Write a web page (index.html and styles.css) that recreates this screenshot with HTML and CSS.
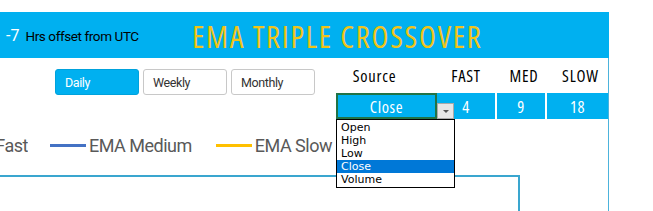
FILE: index.html
```html
<!DOCTYPE html>
<html lang="en">
<head>
    <meta charset="UTF-8">
    <title>EMA Triple Crossover</title>
    <link rel="stylesheet" href="styles.css">
</head>
<body>
    <div class="page">
        <div class="header">
            <div class="offset">
                <span class="offset-value">-7</span>
                <span class="offset-label">Hrs offset from UTC</span>
            </div>
            <h1 class="title">EMA TRIPLE CROSSOVER</h1>
        </div>

        <div class="sheet">
            <div class="controls">
                <div class="period-buttons">
                    <button class="period-btn active">Daily</button>
                    <button class="period-btn">Weekly</button>
                    <button class="period-btn">Monthly</button>
                </div>

                <div class="params">
                    <div class="params-head">
                        <div class="head-cell source-head">Source</div>
                        <div class="head-cell fast">FAST</div>
                        <div class="head-cell med">MED</div>
                        <div class="head-cell slow">SLOW</div>
                    </div>
                    <div class="params-row">
                        <div class="value-cell source-cell">
                            Close
                            <span class="drop-btn"></span>
                            <ul class="drop-list">
                                <li>Open</li>
                                <li>High</li>
                                <li>Low</li>
                                <li class="selected">Close</li>
                                <li>Volume</li>
                            </ul>
                        </div>
                        <div class="value-cell fast">4</div>
                        <div class="value-cell med">9</div>
                        <div class="value-cell slow">18</div>
                    </div>
                </div>
            </div>

            <div class="legend">
                <div class="legend-item legend-cut">
                    <span class="legend-line green"></span>
                    <span>EMA Fast</span>
                </div>
                <div class="legend-item">
                    <span class="legend-line blue"></span>
                    <span>EMA Medium</span>
                </div>
                <div class="legend-item">
                    <span class="legend-line gold"></span>
                    <span>EMA Slow</span>
                </div>
            </div>

            <div class="chart-frame"></div>
        </div>
    </div>
</body>
</html>
```

FILE: styles.css
```css
* {
    margin: 0;
    padding: 0;
    box-sizing: border-box;
}

body {
    background-color: #ffffff;
    font-family: 'Roboto', sans-serif;
    color: #000000;
}

.page {
    width: 653px;
    height: 211px;
    overflow: hidden;
    position: relative;
}

.header {
    margin-top: 12px;
    width: 609px;
    height: 46px;
    background-color: #00b0f0;
    display: flex;
    align-items: center;
    padding-left: 6px;
}

.offset {
    display: flex;
    align-items: baseline;
    width: 186px;
}

.offset-value {
    color: #ffffff;
    font-size: 16px;
    margin-right: 6px;
}

.offset-label {
    font-size: 13.5px;
    letter-spacing: -0.4px;
}

/* condensed humanist face for the sheet cells */
.title,
.params-head,
.value-cell {
    font-family: 'Open Sans', 'Roboto', sans-serif;
    font-stretch: 80%;
}

.title {
    font-size: 31px;
    font-weight: normal;
    letter-spacing: 1.7px;
    color: #f0c419;
    padding-top: 1px;
}

.sheet {
    width: 609px;
    height: 153px;
    border-right: 1px solid #4cb3dc;
}

.controls {
    display: flex;
    padding-top: 5px;
}

.period-buttons {
    display: flex;
    gap: 4px;
    margin-left: 55px;
    margin-top: 6px;
}

.period-btn {
    width: 84px;
    height: 26px;
    border: 1px solid #c8c8c8;
    border-radius: 3px;
    background-color: #ffffff;
    color: #333333;
    font-family: inherit;
    font-size: 12.5px;
    letter-spacing: -0.4px;
    text-align: left;
    padding-left: 9px;
}

.period-btn.active {
    background-color: #00b0f0;
    border-color: #00a2dc;
    color: #ffffff;
}

.params {
    margin-left: auto;
    width: 272px;
}

.params-head,
.params-row {
    display: flex;
}

.params-head {
    height: 24px;
    align-items: center;
    margin-bottom: 6px;
    font-size: 16.5px;
    letter-spacing: 0.8px;
}

.head-cell {
    text-align: center;
}

.source-head,
.source-cell {
    width: 101px;
}

.source-head {
    padding-right: 24px;
}

.fast {
    width: 58px;
}

.med {
    width: 48px;
    margin-left: 2px;
}

.slow {
    width: 61px;
    margin-left: 2px;
}

.head-cell.med,
.head-cell.slow {
    padding-left: 6px;
}

.value-cell {
    height: 26px;
    background-color: #00b0f0;
    color: #ffffff;
    font-size: 16.5px;
    letter-spacing: 0.6px;
    display: flex;
    align-items: center;
    justify-content: center;
}

.source-cell {
    border: 2px solid #217346;
    position: relative;
}

/* dropdown affordance and open list */
.drop-btn {
    position: absolute;
    left: 99px;
    top: 8px;
    width: 17px;
    height: 16px;
    background-color: #e6e6e6;
    border: 1px solid #a9a9a9;
}

.drop-btn::after {
    content: '';
    position: absolute;
    left: 5px;
    top: 6px;
    border-left: 3px solid transparent;
    border-right: 3px solid transparent;
    border-top: 3px solid #555555;
}

.drop-list {
    position: absolute;
    left: -2px;
    top: 24px;
    width: 119px;
    list-style: none;
    background-color: #ffffff;
    border: 1px solid #000000;
    padding: 1px 0 1px 0;
    font-family: 'DejaVu Sans', sans-serif;
    font-stretch: normal;
    font-size: 11px;
    letter-spacing: 0;
    color: #000000;
    z-index: 5;
}

.drop-list li {
    height: 13px;
    line-height: 13px;
    padding-left: 4px;
}

.drop-list li.selected {
    background-color: #0078d7;
    color: #ffffff;
}

.legend {
    display: flex;
    align-items: center;
    height: 24px;
    margin-top: 14px;
    font-size: 18px;
    letter-spacing: -0.5px;
    color: #595959;
}

.legend-item {
    display: flex;
    align-items: center;
    gap: 3px;
    margin-right: 24px;
    white-space: nowrap;
}

.legend-cut {
    width: 28px;
    overflow: hidden;
    justify-content: flex-end;
    margin-right: 22px;
    flex-shrink: 0;
}

.legend-line {
    width: 36px;
    height: 3px;
    flex-shrink: 0;
}

.legend-line.green { background-color: #70ad47; }
.legend-line.blue { background-color: #4472c4; }
.legend-line.gold { background-color: #ffc000; }

.chart-frame {
    margin-top: 18px;
    margin-left: -2px;
    width: 522px;
    height: 60px;
    border-top: 2px solid #3aa6cf;
    border-right: 2px solid #3aa6cf;
}
```
